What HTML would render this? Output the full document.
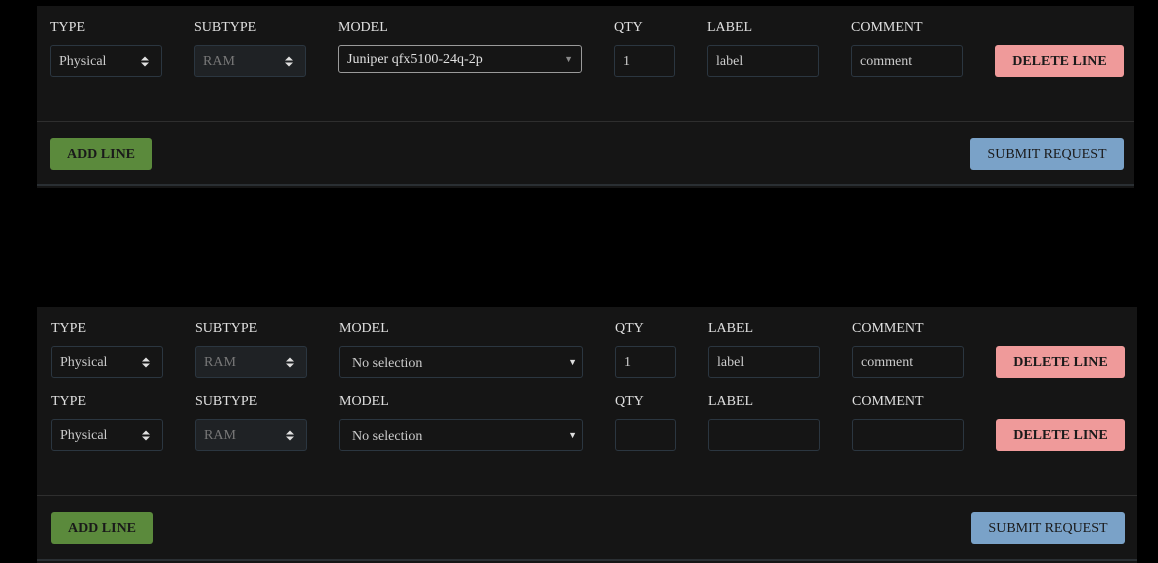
<!DOCTYPE html>
<html><head><style>
*{box-sizing:border-box;margin:0;padding:0}
body{width:1158px;height:563px;background:#000;position:relative;overflow:hidden;font-family:"Liberation Serif",serif;color:#ddd}
.p{position:absolute;background:#151515}
.sep{position:absolute;left:0;right:0;height:1px;background:#2e2e2e}
.bl{position:absolute;left:0;right:0;height:2px;background:#2a2f33}
.l{position:absolute;font-size:14px;color:#e0e0e0;line-height:16px;margin-top:2px}
.i{position:absolute;height:32px;border:1px solid #2b3640;border-radius:3px;font-size:14px;line-height:32px;padding-left:8px;color:#ccc;background:#151515}
.i.dis{background:#1f2225;color:#777}
.arr{position:absolute;right:12px;top:10px;width:8px;height:11px}
.m{position:absolute;height:32px;border:1px solid #2b3640;border-radius:3px;font-size:14px;line-height:34px;padding-left:12px;color:#ccc}
.tri{position:absolute;right:5px;font-size:9px;color:#ddd;line-height:30px;top:0}
.b{position:absolute;height:32px;border-radius:3px;font-size:14px;line-height:34px;text-align:center;color:#1a1a1a}
.del{background:#ef9a9a;font-weight:bold}
.add{background:#5b8a3c;font-weight:bold}
.sub{background:#7aa2c8}
</style></head><body>
<svg width="0" height="0" style="position:absolute"><defs><symbol id="s" viewBox="0 0 8 11"><path d="M0 4.5L4 0.5L8 4.5Z M0 6.5L4 10.5L8 6.5Z" fill="#e0e0e0"/></symbol></defs></svg>

<div class="p" style="left:37px;top:6px;width:1097px;height:182px">
<div class="sep" style="top:115px"></div><div class="bl" style="top:178px"></div>
</div>
<div class="l" style="left:50px;top:18px">TYPE</div>
<div class="l" style="left:194px;top:18px">SUBTYPE</div>
<div class="l" style="left:338px;top:18px">MODEL</div>
<div class="l" style="left:614px;top:18px">QTY</div>
<div class="l" style="left:707px;top:18px">LABEL</div>
<div class="l" style="left:851px;top:18px">COMMENT</div>
<div class="i" style="left:50px;top:45px;width:112px">Physical<svg class="arr"><use href="#s"/></svg></div>
<div class="i dis" style="left:194px;top:45px;width:112px">RAM<svg class="arr"><use href="#s"/></svg></div>
<div class="i" style="left:338px;top:45px;width:244px;height:28px;line-height:28px;border-color:#9a9a9a;color:#e0e0e0">Juniper qfx5100-24q-2p<span class="tri" style="right:8px;line-height:26px;color:#888">▼</span></div>
<div class="i" style="left:614px;top:45px;width:61px">1</div>
<div class="i" style="left:707px;top:45px;width:112px">label</div>
<div class="i" style="left:851px;top:45px;width:112px">comment</div>
<div class="b del" style="left:995px;top:45px;width:129px">DELETE LINE</div>
<div class="b add" style="left:50px;top:138px;width:102px">ADD LINE</div>
<div class="b sub" style="left:970px;top:138px;width:154px">SUBMIT REQUEST</div>

<div class="p" style="left:37px;top:307px;width:1100px;height:256px">
<div class="sep" style="top:188px"></div><div class="bl" style="top:252px"></div>
</div>

<div class="l" style="left:51px;top:319px">TYPE</div>
<div class="l" style="left:195px;top:319px">SUBTYPE</div>
<div class="l" style="left:339px;top:319px">MODEL</div>
<div class="l" style="left:615px;top:319px">QTY</div>
<div class="l" style="left:708px;top:319px">LABEL</div>
<div class="l" style="left:852px;top:319px">COMMENT</div>
<div class="i" style="left:51px;top:346px;width:112px">Physical<svg class="arr"><use href="#s"/></svg></div>
<div class="i dis" style="left:195px;top:346px;width:112px">RAM<svg class="arr"><use href="#s"/></svg></div>
<div class="m" style="left:339px;top:346px;width:244px">No selection<span class="tri">▼</span></div>
<div class="i" style="left:615px;top:346px;width:61px">1</div>
<div class="i" style="left:708px;top:346px;width:112px">label</div>
<div class="i" style="left:852px;top:346px;width:112px">comment</div>
<div class="b del" style="left:996px;top:346px;width:129px">DELETE LINE</div>

<div class="l" style="left:51px;top:392px">TYPE</div>
<div class="l" style="left:195px;top:392px">SUBTYPE</div>
<div class="l" style="left:339px;top:392px">MODEL</div>
<div class="l" style="left:615px;top:392px">QTY</div>
<div class="l" style="left:708px;top:392px">LABEL</div>
<div class="l" style="left:852px;top:392px">COMMENT</div>
<div class="i" style="left:51px;top:419px;width:112px">Physical<svg class="arr"><use href="#s"/></svg></div>
<div class="i dis" style="left:195px;top:419px;width:112px">RAM<svg class="arr"><use href="#s"/></svg></div>
<div class="m" style="left:339px;top:419px;width:244px">No selection<span class="tri">▼</span></div>
<div class="i" style="left:615px;top:419px;width:61px"></div>
<div class="i" style="left:708px;top:419px;width:112px"></div>
<div class="i" style="left:852px;top:419px;width:112px"></div>
<div class="b del" style="left:996px;top:419px;width:129px">DELETE LINE</div>

<div class="b add" style="left:51px;top:512px;width:102px">ADD LINE</div>
<div class="b sub" style="left:971px;top:512px;width:154px">SUBMIT REQUEST</div>
</body></html>
